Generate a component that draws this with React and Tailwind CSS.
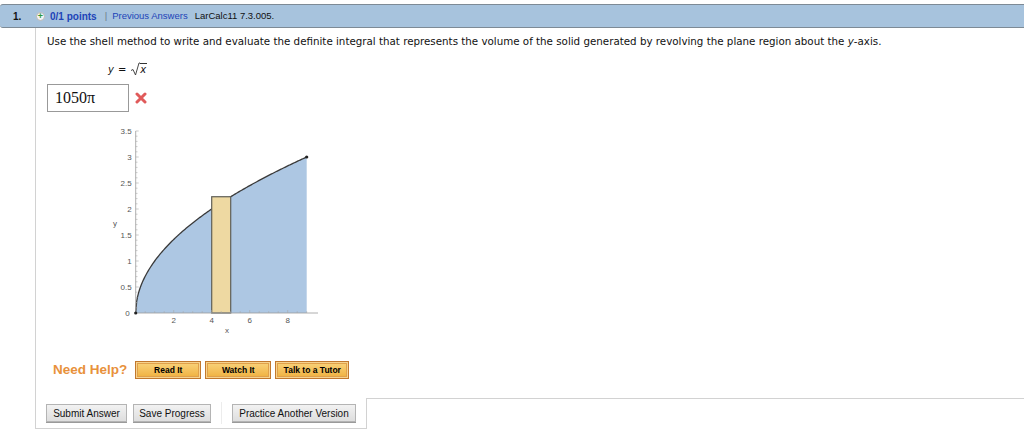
import React from "react";

const sans = { fontFamily: '"Liberation Sans", Arial, sans-serif' };

/* ---------------- GRAPH ---------------- */
function ShellGraph() {
  const ox = 35.7;
  const oy = 192;
  const sx = 19;
  const sy = 52;
  const px = (t) => ox + sx * t;
  const py = (v) => oy - sy * v;

  const curve = [];
  for (let i = 0; i <= 180; i++) {
    const t = (9 * i) / 180;
    curve.push(`${px(t).toFixed(2)},${py(Math.sqrt(t)).toFixed(2)}`);
  }
  const area = `M${px(0)},${oy} L${curve.join(" L")} L${px(9)},${oy} Z`;
  const line = `M${curve.join(" L")}`;

  const yMinor = [];
  for (let i = 1; i <= 35; i++) yMinor.push(i / 10);
  const xMinor = [];
  for (let i = 1; i <= 18; i++) xMinor.push(i / 2);

  return (
    <svg width="230" height="230" viewBox="0 0 230 230" className="block">
      <path d={area} fill="#adc7e3" />
      <path d={line} fill="none" stroke="#3a3a3a" strokeWidth="1.3" />
      <rect
        x={px(4)}
        y={py(Math.sqrt(5))}
        width={sx}
        height={oy - py(Math.sqrt(5))}
        fill="#eed9a2"
        stroke="#5f5f57"
        strokeWidth="1.2"
      />
      {/* axes */}
      <line x1={ox} y1={10} x2={ox} y2={oy} stroke="#9a9a9a" strokeWidth="0.8" />
      <line x1={ox} y1={oy} x2={218} y2={oy} stroke="#9a9a9a" strokeWidth="0.8" />
      {yMinor.map((v) => (
        <line
          key={v}
          x1={ox}
          x2={ox + (Math.abs(v * 2 - Math.round(v * 2)) < 0.01 ? 3 : 1.8)}
          y1={py(v)}
          y2={py(v)}
          stroke="#a8a8a8"
          strokeWidth="0.6"
        />
      ))}
      {xMinor.map((v) => (
        <line
          key={v}
          y1={oy}
          y2={oy - (v % 2 === 0 ? 3 : 1.8)}
          x1={px(v)}
          x2={px(v)}
          stroke="#a8a8a8"
          strokeWidth="0.6"
        />
      ))}
      <circle cx={px(0)} cy={oy} r="1.6" fill="#222" />
      <circle cx={px(9)} cy={py(3)} r="1.6" fill="#222" />
      <g fill="#555" fontSize="8" fontFamily="Liberation Sans, Arial, sans-serif" textAnchor="end">
        {["0.5", "1", "1.5", "2", "2.5", "3", "3.5"].map((l) => (
          <text key={l} x={ox - 4} y={py(parseFloat(l)) + 2.8}>
            {l}
          </text>
        ))}
        <text x={ox - 6} y={oy + 2.8}>0</text>
      </g>
      <g fill="#555" fontSize="8" fontFamily="Liberation Sans, Arial, sans-serif" textAnchor="middle">
        {[2, 4, 6, 8].map((l) => (
          <text key={l} x={px(l)} y={oy + 9.5}>
            {l}
          </text>
        ))}
        <text x={127} y={212}>x</text>
        <text x={15} y={105}>y</text>
      </g>
    </svg>
  );
}

/* ---------------- BUTTONS ---------------- */
function HelpButton({ children, w }) {
  return (
    <div className={`${w} h-[18px] border border-[#c2782d] p-[1px] bg-[#f6d38f]`}>
      <div className="h-full border border-[#e0a04a] bg-gradient-to-b from-[#f8cf74] to-[#f0b445] flex items-center justify-center text-[8.5px] font-bold text-black">
        {children}
      </div>
    </div>
  );
}

function GrayButton({ children, w }) {
  return (
    <button
      className={`${w} h-[18px] border border-[#b4b4b4] bg-gradient-to-b from-[#f2f2f2] to-[#dedede] text-[10px] text-[#111] flex items-center justify-center shadow-[0_1px_0_#9a9a9a]`}
      style={sans}
    >
      {children}
    </button>
  );
}

export default function App() {
  return (
    <div className="w-[1024px] h-[439px] bg-white pt-[4px] overflow-hidden">
      {/* HEADER */}
      <div
        className="h-[24px] bg-[#a7c3dd] border-y border-[#7d8a95] rounded-l-[3px] flex items-center text-[9.5px]"
        style={sans}
      >
        <span className="ml-[13px] w-[23px] font-bold text-[10px] text-[#111]">1.</span>
        <span className="w-[9px] h-[9px] rounded-full bg-[#f4f4f4] border border-[#b7b7b7] flex items-center justify-center text-[#2e9a3a] text-[9px] font-bold leading-none">
          +
        </span>
        <span className="ml-[5px] font-bold text-[10px] text-[#1d44b8]">0/1 points</span>
        <span className="ml-[8px] text-[#6b7a8a]">|</span>
        <span className="ml-[5px] text-[#1d44b8]">Previous Answers</span>
        <span className="ml-[7px] text-[#111]">LarCalc11 7.3.005.</span>
      </div>

      {/* BODY */}
      <div className="ml-[35px] border-l border-[#d2d2d2] h-[401px] flex flex-col">
        <div className="pl-[11px] pt-[6px]">
          <p
            className="text-[10.3px] text-[#111] leading-[14px] whitespace-nowrap"
            style={{ fontFamily: '"DejaVu Sans", Verdana, sans-serif' }}
          >
            Use the shell method to write and evaluate the definite integral that represents the volume of the solid generated by revolving the plane region about the <i>y</i>-axis.
          </p>

          <div
            className="mt-[14px] ml-[61px] flex items-center text-[10px] text-[#111] h-[14px]"
            style={{ fontFamily: '"DejaVu Sans", Verdana, sans-serif' }}
          >
            <i>y</i>
            <span className="ml-[4px]">=</span>
            <span className="ml-[4px] flex items-end">
              <svg width="10" height="14" viewBox="0 0 10 14">
                <path d="M1 8.5 L3 7.5 L5.5 13 L9 1 L10 1" fill="none" stroke="#333" strokeWidth="0.9" />
              </svg>
              <i className="border-t border-[#333] leading-[12px] pr-[1px]">x</i>
            </span>
          </div>

          <div className="mt-[8px] flex items-center">
            <div
              className="w-[82px] h-[28px] border border-[#999] flex items-center pl-[7px] text-[16px] text-[#111]"
              style={{ fontFamily: '"Liberation Serif", "Times New Roman", serif' }}
            >
              1050π
            </div>
            <svg width="12" height="12" viewBox="0 0 12 12" className="ml-[6px]">
              <path d="M2 2 L10 10 M10 2 L2 10" stroke="#e05a5a" strokeWidth="3" strokeLinecap="round" />
            </svg>
          </div>

          <div className="mt-[9px] ml-[53px]">
            <ShellGraph />
          </div>

          <div className="mt-[9px] flex items-center" style={sans}>
            <span className="ml-[6px] text-[13.5px] font-bold text-[#e8913b]">Need Help?</span>
            <div className="ml-[8px]">
              <HelpButton w="w-[66px]">Read It</HelpButton>
            </div>
            <div className="ml-[4px]">
              <HelpButton w="w-[66px]">Watch It</HelpButton>
            </div>
            <div className="ml-[4px]">
              <HelpButton w="w-[74px]">Talk to a Tutor</HelpButton>
            </div>
          </div>
        </div>

        {/* ACTION ROW */}
        <div className="mt-auto flex items-start">
          <div className="w-[331px] h-[31px] border-b border-r border-[#d2d2d2] flex items-center pl-[10px]">
            <GrayButton w="w-[81px]">Submit Answer</GrayButton>
            <div className="ml-[6px]">
              <GrayButton w="w-[78px]">Save Progress</GrayButton>
            </div>
            <div className="ml-[10px] w-px h-[22px] bg-[#ececec]" />
            <div className="ml-[10px]">
              <GrayButton w="w-[124px]">Practice Another Version</GrayButton>
            </div>
          </div>
          <div className="flex-1 border-t border-[#d2d2d2]" />
        </div>
      </div>
    </div>
  );
}
